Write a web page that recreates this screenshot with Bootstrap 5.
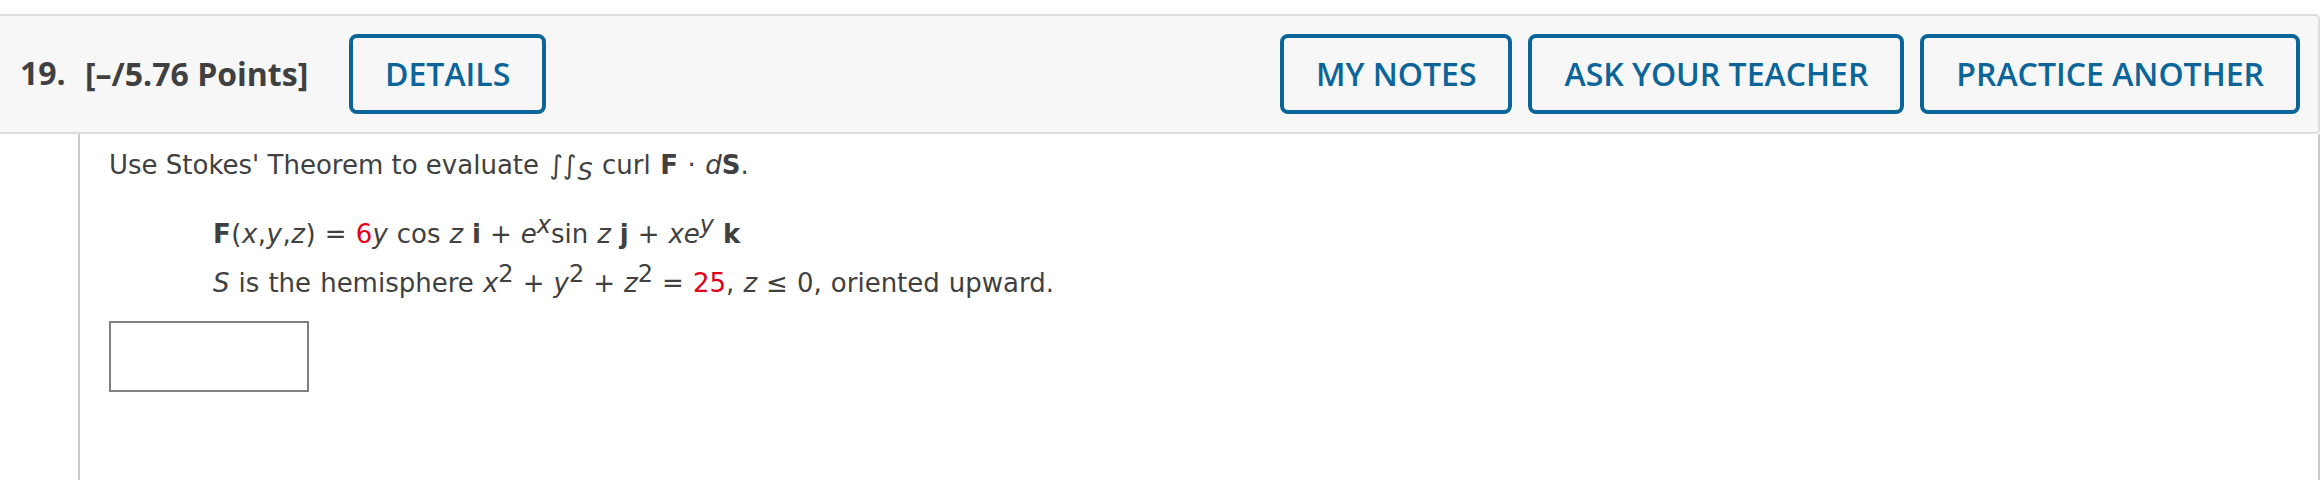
<!DOCTYPE html>
<html lang="en">
<head>
  <meta charset="UTF-8">
  <meta name="viewport" content="width=device-width, initial-scale=1.0">
  <title>Question 19</title>
  <link href="https://cdn.jsdelivr.net/npm/bootstrap@5.3.0/dist/css/bootstrap.min.css" rel="stylesheet">
  <style>
    body {
      color: #404040;
      font-family: "DejaVu Sans", sans-serif;
      font-size: 26px;
      line-height: 32px;
      height: 480px;
      overflow: hidden;
    }
    .question {
      height: 466px;
      margin: 14px 2px 0 0;
    }
    .question-header {
      height: 120px;
      padding: 0 18px 0 20px;
      background: #f7f7f7;
      border: 2px solid #ddd;
      border-left: 0;
      border-radius: 0 5px 5px 0;
      font-family: "Open Sans", sans-serif;
      font-size: 32px;
    }
    .question-number { width: 65px; padding-bottom: 2px; }
    .question-points { width: 264px; white-space: nowrap; }
    .btn-question {
      --bs-btn-color: #0b6598;
      --bs-btn-border-color: #0b6598;
      --bs-btn-hover-color: #fff;
      --bs-btn-hover-bg: #0b6598;
      --bs-btn-font-size: 32px;
      --bs-btn-font-weight: 600;
      --bs-btn-border-width: 4px;
      --bs-btn-border-radius: 8px;
      --bs-btn-padding-x: 32px;
      --bs-btn-padding-y: 0;
      height: 80px;
      white-space: nowrap;
    }
    .question-body {
      margin-left: 78px;
      padding: 15px 29px 0;
      border: solid #ccc;
      border-width: 0 2px;
    }
    .question-body p { white-space: nowrap; }
    .formula { margin: 37px 0 0 104px; }
    .formula p { margin-bottom: 17px; }
    .formula p:last-child { margin-bottom: 22px; }
    sub, sup { font-size: 24px; line-height: 0; }
    sup { top: -10px; }
    .integral { margin: 0 1px 0 2px; }
    .curl { word-spacing: 1.2px; }
    .args { letter-spacing: .5px; }
    .terms { word-spacing: .7px; }
    .surface { word-spacing: .8px; }
    .rand { color: #e2001a; }
    .answer {
      width: 200px;
      height: 71px;
      border: 2px solid #808080;
      border-radius: 0;
    }
  </style>
</head>
<body class="bg-white">
  <div class="question d-flex flex-column">
    <div class="question-header d-flex align-items-center flex-shrink-0">
      <span class="question-number fw-bold">19.</span>
      <span class="question-points fw-bold">[–/5.76 Points]</span>
      <button type="button" class="btn btn-question">DETAILS</button>
      <div class="d-flex gap-3 ms-auto">
        <button type="button" class="btn btn-question">MY NOTES</button>
        <button type="button" class="btn btn-question">ASK YOUR TEACHER</button>
        <button type="button" class="btn btn-question">PRACTICE ANOTHER</button>
      </div>
    </div>
    <div class="question-body flex-grow-1">
      <p class="mb-0">Use Stokes' Theorem to evaluate <span class="integral">∫∫</span><sub><i>S</i></sub><span class="curl"> curl <b>F</b> · <i>d</i><b>S</b>.</span></p>
      <div class="formula">
        <p><span class="args"><b>F</b>(<i>x</i>,<i>y</i>,<i>z</i>) = </span><span class="terms"><span class="rand">6</span><i>y</i> cos <i>z</i> <b>i</b> + <i>e</i><sup><i>x</i></sup>sin <i>z</i> <b>j</b> + <i>xe</i><sup><i>y</i></sup> <b>k</b></span></p>
        <p class="surface"><i>S</i> is the hemisphere <i>x</i><sup>2</sup> + <i>y</i><sup>2</sup> + <i>z</i><sup>2</sup> = <span class="rand">25</span>, <i>z</i> ≤ 0, oriented upward.</p>
      </div>
      <input type="text" class="form-control answer" aria-label="Answer">
    </div>
  </div>
  <script src="https://cdn.jsdelivr.net/npm/bootstrap@5.3.0/dist/js/bootstrap.bundle.min.js"></script>
</body>
</html>
